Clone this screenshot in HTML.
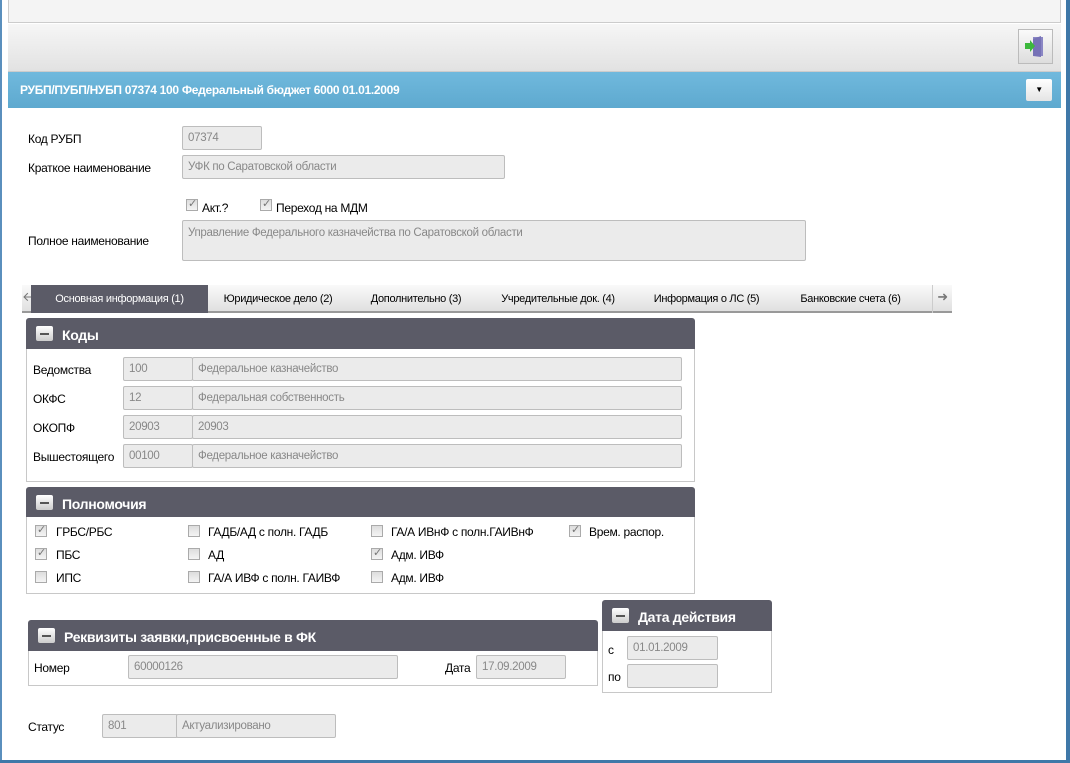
<!DOCTYPE html>
<html><head><meta charset="utf-8"><style>
*{box-sizing:border-box;margin:0;padding:0}
body{width:1070px;height:763px;position:relative;background:#fff;font-family:"Liberation Sans",sans-serif;font-size:12px;color:#000;overflow:hidden;letter-spacing:-0.3px}
.a{position:absolute}
.inp{position:absolute;background:#ebebeb;border:1px solid #bdbdbd;border-radius:2px;color:#888;font-size:11.5px;padding:0 5px;height:24px;line-height:22px;white-space:nowrap}
.lbl{position:absolute;font-size:12px;white-space:nowrap}
.ph{position:absolute;background:#5b5b67;color:#fff;font-weight:bold;font-size:14px;border-radius:3px 3px 0 0;padding:9px 0 0 36px}
.ph .m{position:absolute;left:10px;top:8px;width:17px;height:15px;background:linear-gradient(#fff,#ccc);border-radius:2px}
.ph .m:after{content:"";position:absolute;left:4px;top:7px;width:9px;height:2px;background:#555}
.pb{position:absolute;border:1px solid #c8c8c8;border-top:none;background:#fff}
.cb{position:absolute;width:12px;height:12px;border:1px solid #aaa;background:linear-gradient(#ddd,#f4f4f4)}
.cb.c:after{content:"✓";position:absolute;left:1px;top:-3px;font-size:11px;color:#777}
.cl{position:absolute;font-size:12px;white-space:nowrap}
.tab{position:absolute;top:285px;height:28px;font-size:11px;padding-top:8px;text-align:center;white-space:nowrap}
</style></head><body>
<div class="a" style="left:0;top:0;width:2px;height:763px;background:#5a8fbd"></div>
<div class="a" style="left:1066px;top:0;width:4px;height:763px;background:#3f78a8"></div>
<div class="a" style="left:0;top:760px;width:1070px;height:3px;background:#3f78a8"></div>
<div class="a" style="left:8px;top:0;width:1053px;height:23px;background:#f4f4f4;border:1px solid #ccc;border-top:none"></div>
<div class="a" style="left:8px;top:24px;width:1053px;height:48px;background:linear-gradient(#f6f6f6,#e2e2e2);border-bottom:1px solid #ccc"></div>
<div class="a" style="left:1018px;top:29px;width:35px;height:35px;border:1px solid #bbb;background:linear-gradient(#fafafa,#ddd)">
<svg width="33" height="33"><rect x="14" y="7" width="10" height="19" fill="#8a86c4"/><polygon points="14,9 22,6 22,27 14,26" fill="#7672b6"/><polygon points="6,13 11,13 11,10 16,16 11,22 11,19 6,19" fill="#3cb83c"/></svg></div>
<div class="a" style="left:8px;top:72px;width:1053px;height:36px;background:linear-gradient(#70b9dd,#5ea9cf);color:#fff;font-weight:bold;font-size:12px;padding:11px 0 0 12px">РУБП/ПУБП/НУБП 07374 100 Федеральный бюджет 6000 01.01.2009</div>
<div class="a" style="left:1026px;top:79px;width:26px;height:22px;background:linear-gradient(#fff,#e4e4e4);border-radius:2px;text-align:center;font-size:8px;padding-top:6px">▼</div>

<div class="lbl" style="left:28px;top:132px">Код РУБП</div>
<div class="inp" style="left:182px;top:126px;width:80px">07374</div>
<div class="lbl" style="left:28px;top:161px">Краткое наименование</div>
<div class="inp" style="left:182px;top:155px;width:323px">УФК по Саратовской области</div>
<div class="cb c" style="left:186px;top:199px"></div><div class="cl" style="left:202px;top:201px">Акт.?</div>
<div class="cb c" style="left:260px;top:199px"></div><div class="cl" style="left:276px;top:201px">Переход на МДМ</div>
<div class="lbl" style="left:28px;top:234px">Полное наименование</div>
<div class="inp" style="left:182px;top:220px;width:624px;height:41px;line-height:24px">Управление Федерального казначейства по Саратовской области</div>

<div class="a" style="left:22px;top:285px;width:930px;height:28px;background:linear-gradient(#fafafa,#e0e0e0);border-bottom:2px solid #999"></div>
<div class="tab" style="left:22px;width:10px;color:#777;font-size:13px;padding-top:4px">🡐</div>
<div class="tab" style="left:31px;width:177px;background:#5b5b67;color:#fff">Основная информация (1)</div>
<div class="tab" style="left:208px;width:140px">Юридическое дело (2)</div>
<div class="tab" style="left:350px;width:132px">Дополнительно (3)</div>
<div class="tab" style="left:482px;width:152px">Учредительные док. (4)</div>
<div class="tab" style="left:634px;width:145px">Информация о ЛС (5)</div>
<div class="tab" style="left:779px;width:143px">Банковские счета (6)</div>
<div class="tab" style="left:932px;width:20px;color:#777;border-left:1px solid #ccc;font-size:13px;padding-top:4px">➜</div>

<div class="ph" style="left:26px;top:318px;width:669px;height:31px"><span class="m"></span>Коды</div>
<div class="pb" style="left:26px;top:349px;width:669px;height:133px"></div>
<div class="lbl" style="left:33px;top:363px">Ведомства</div><div class="inp" style="left:123px;top:357px;width:70px">100</div><div class="inp" style="left:192px;top:357px;width:490px">Федеральное казначейство</div>
<div class="lbl" style="left:33px;top:392px">ОКФС</div><div class="inp" style="left:123px;top:386px;width:70px">12</div><div class="inp" style="left:192px;top:386px;width:490px">Федеральная собственность</div>
<div class="lbl" style="left:33px;top:421px">ОКОПФ</div><div class="inp" style="left:123px;top:415px;width:70px">20903</div><div class="inp" style="left:192px;top:415px;width:490px">20903</div>
<div class="lbl" style="left:33px;top:450px">Вышестоящего</div><div class="inp" style="left:123px;top:444px;width:70px">00100</div><div class="inp" style="left:192px;top:444px;width:490px">Федеральное казначейство</div>

<div class="ph" style="left:26px;top:487px;width:669px;height:30px"><span class="m"></span>Полномочия</div>
<div class="pb" style="left:26px;top:517px;width:669px;height:77px"></div>
<div class="cb c" style="left:35px;top:525px"></div><div class="cl" style="left:56px;top:525px">ГРБС/РБС</div>
<div class="cb c" style="left:35px;top:548px"></div><div class="cl" style="left:56px;top:548px">ПБС</div>
<div class="cb" style="left:35px;top:571px"></div><div class="cl" style="left:56px;top:571px">ИПС</div>
<div class="cb" style="left:188px;top:525px"></div><div class="cl" style="left:208px;top:525px">ГАДБ/АД с полн. ГАДБ</div>
<div class="cb" style="left:188px;top:548px"></div><div class="cl" style="left:208px;top:548px">АД</div>
<div class="cb" style="left:188px;top:571px"></div><div class="cl" style="left:208px;top:571px">ГА/А ИВФ с полн. ГАИВФ</div>
<div class="cb" style="left:371px;top:525px"></div><div class="cl" style="left:391px;top:525px">ГА/А ИВнФ с полн.ГАИВнФ</div>
<div class="cb c" style="left:371px;top:548px"></div><div class="cl" style="left:391px;top:548px">Адм. ИВФ</div>
<div class="cb" style="left:371px;top:571px"></div><div class="cl" style="left:391px;top:571px">Адм. ИВФ</div>
<div class="cb c" style="left:569px;top:525px"></div><div class="cl" style="left:589px;top:525px">Врем. распор.</div>

<div class="ph" style="left:28px;top:620px;width:570px;height:31px"><span class="m"></span>Реквизиты заявки,присвоенные в ФК</div>
<div class="pb" style="left:28px;top:651px;width:570px;height:35px"></div>
<div class="lbl" style="left:34px;top:661px">Номер</div><div class="inp" style="left:128px;top:655px;width:270px">60000126</div>
<div class="lbl" style="left:445px;top:661px">Дата</div><div class="inp" style="left:476px;top:655px;width:90px">17.09.2009</div>

<div class="ph" style="left:602px;top:600px;width:170px;height:31px"><span class="m"></span>Дата действия</div>
<div class="pb" style="left:602px;top:631px;width:170px;height:62px"></div>
<div class="lbl" style="left:608px;top:643px">с</div><div class="inp" style="left:627px;top:636px;width:91px">01.01.2009</div>
<div class="lbl" style="left:608px;top:670px">по</div><div class="inp" style="left:627px;top:664px;width:91px"></div>

<div class="lbl" style="left:28px;top:720px">Статус</div>
<div class="inp" style="left:102px;top:714px;width:76px">801</div><div class="inp" style="left:176px;top:714px;width:160px">Актуализировано</div>
</body></html>
